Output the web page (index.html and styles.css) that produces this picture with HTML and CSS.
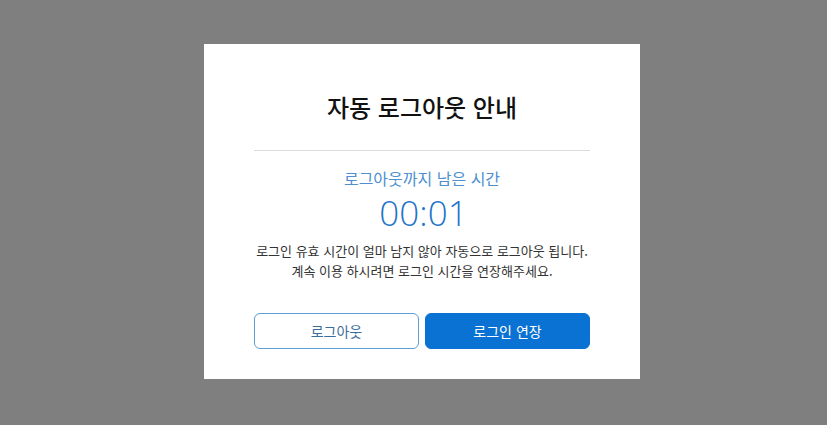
FILE: index.html
```html
<!DOCTYPE html>
<html lang="ko">
<head>
<meta charset="utf-8">
<link rel="stylesheet" href="styles.css">
</head>
<body>
<div class="overlay">
  <div class="modal">
    <h1 class="title">자동 로그아웃 안내</h1>
    <hr class="divider">
    <p class="label">로그아웃까지 남은 시간</p>
    <p class="timer">00:01</p>
    <p class="desc">로그인 유효 시간이 얼마 남지 않아 자동으로 로그아웃 됩니다.<br>계속 이용 하시려면 로그인 시간을 연장해주세요.</p>
    <div class="actions">
      <button class="btn btn-outline">로그아웃</button>
      <button class="btn btn-primary">로그인 연장</button>
    </div>
  </div>
</div>
</body>
</html>
```
FILE: styles.css
```css
html, body {
  margin: 0;
  padding: 0;
  height: 100%;
}
body {
  background: #7f7f7f;
  font-family: "Noto Sans CJK KR", "Noto Sans", sans-serif;
}
.overlay {
  height: 100%;
  display: flex;
  align-items: flex-start;
  justify-content: center;
  padding: 44px 0 0 17px;
  box-sizing: border-box;
}
.modal {
  width: 436px;
  height: 335px;
  box-sizing: border-box;
  background: #fff;
  padding: 45px 50px 30px;
  text-align: center;
}
.title {
  margin: 0;
  font-size: 24px;
  line-height: 36px;
  font-weight: 500;
  color: #111;
}
.divider {
  border: 0;
  border-top: 1px solid #dcdcdc;
  margin: 25px 0 0;
}
.label {
  margin: 15px 0 0;
  font-size: 16px;
  line-height: 24px;
  color: #4d8fcf;
}
.timer {
  margin: 3px 0 0 3px;
  font-family: "Open Sans", sans-serif;
  font-weight: 300;
  font-size: 35px;
  line-height: 40px;
  color: #1f74c9;
}
.desc {
  margin: 8px -20px 0;
  font-size: 13px;
  line-height: 20px;
  color: #333;
  white-space: nowrap;
}
.actions {
  margin-top: 32px;
  display: flex;
  gap: 6px;
}
.btn {
  flex: 1;
  height: 36px;
  border-radius: 6px;
  font-family: "Noto Sans CJK KR", sans-serif;
  font-size: 14px;
  font-weight: 400;
  box-sizing: border-box;
}
.btn-outline {
  background: #fff;
  border: 1px solid #5c9fd6;
  color: #3a6d9e;
}
.btn-primary {
  background: #0a72d2;
  border: 1px solid #0a72d2;
  color: #fff;
}
```
